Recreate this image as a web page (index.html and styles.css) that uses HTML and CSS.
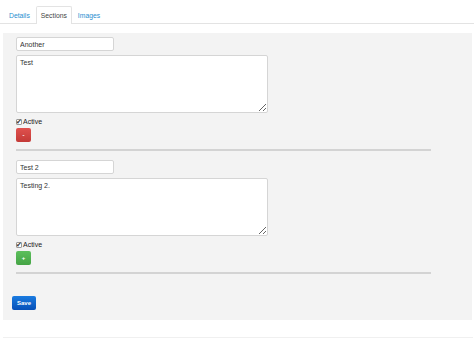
FILE: index.html
```html
<!DOCTYPE html>
<html>
<head>
<meta charset="utf-8">
<link rel="stylesheet" href="styles.css">
</head>
<body>
<div class="tabs">
  <a class="tab">Details</a>
  <a class="tab active">Sections</a>
  <a class="tab">Images</a>
</div>
<div class="panel">
  <div class="section">
    <input class="title" type="text" value="Another">
    <textarea class="body">Test</textarea>
    <label class="check"><input type="checkbox" checked> Active</label>
    <button class="btn red">-</button>
  </div>
  <div class="section">
    <input class="title" type="text" value="Test 2">
    <textarea class="body">Testing 2.</textarea>
    <label class="check"><input type="checkbox" checked> Active</label>
    <button class="btn green">+</button>
  </div>
  <button class="save">Save</button>
</div>
<div class="foot"></div>
</body>
</html>
```
FILE: styles.css
```css
html, body { margin: 0; padding: 0; background: #fff; }
body { font-family: "Liberation Sans", Arial, sans-serif; font-size: 7px; color: #333; width: 474px; }
.tabs { display: flex; align-items: flex-end; height: 23px; border-bottom: 1px solid #e3e3e3; padding-left: 4px; }
.tab { display: block; padding: 0 4px; height: 16px; line-height: 17px; font-size: 6.8px; color: #2a8fd0; margin-right: 1px; border: 1px solid transparent; border-bottom: none; border-radius: 2px 2px 0 0; }
.tab.active { color: #444; background: #fff; border-color: #e3e3e3; margin-bottom: -1px; padding-bottom: 1px; }
.panel { margin: 9px 2px 0 3px; height: 287px; background: #f3f3f3; padding: 4px 0 0 13px; box-sizing: border-box; }
.section { width: 415px; border-bottom: 2px solid #d3d3d3; padding-bottom: 7px; margin-bottom: 9px; display: flex; flex-direction: column; align-items: flex-start; }
.title { width: 98px; height: 14px; box-sizing: border-box; border: 1px solid #d5d5d5; border-radius: 2px; font: 7px "Liberation Sans", Arial, sans-serif; color: #333; padding: 0 3px; margin: 0; background: #fff; }
.body { width: 252px; height: 58px; box-sizing: border-box; border: 1px solid #d5d5d5; border-radius: 2px; font: 7px "Liberation Sans", Arial, sans-serif; color: #333; padding: 3px; margin: 4px 0 0 0; resize: both; background: #fff; }
.check { display: flex; align-items: center; margin-top: 3px; height: 11px; font-size: 7px; color: #222; }
.check input { appearance: none; -webkit-appearance: none; position: relative; width: 6px; height: 6px; margin: 0 1px 0 0; border: 1px solid #9a9a9a; border-radius: 1px; background: #fff; box-sizing: border-box; }
.check input:checked::after { content: "\2714"; position: absolute; left: -1px; top: -2px; font-size: 7px; line-height: 8px; color: #333; }
.btn { width: 15px; height: 14px; margin-top: 1px; border: none; border-radius: 2px; color: #fff; font: bold 6px "Liberation Sans", Arial, sans-serif; padding: 0; }
.red { background: linear-gradient(#e0514e, #c33a37); }
.green { background: linear-gradient(#5cbf5c, #45a445); }
.save { margin: 13px 0 0 -4px; width: 24px; height: 14px; border: none; border-radius: 2px; background: linear-gradient(#1a7be0, #0650b8); color: #fff; font: bold 6px "Liberation Sans", Arial, sans-serif; padding: 0; }
.foot { margin: 17px 0 0 3px; border-top: 1px solid #f0f0f0; width: 470px; }
```
